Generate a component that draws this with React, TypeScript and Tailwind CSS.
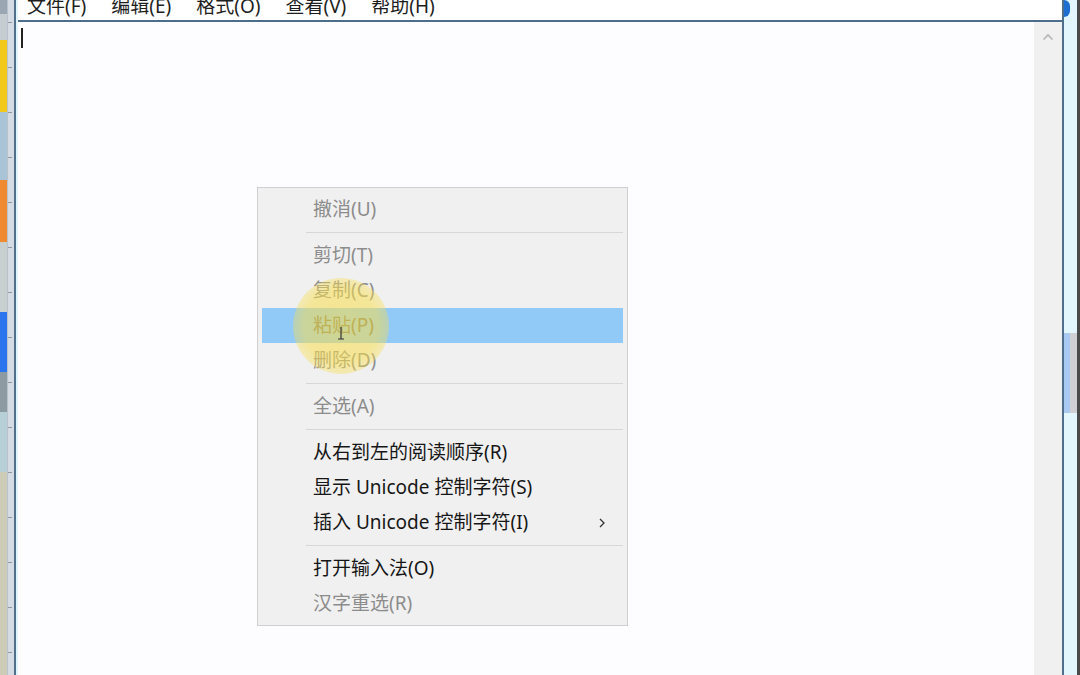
import React from "react";

const font = { fontFamily: '"Noto Sans", "Noto Sans CJK SC", sans-serif' };

type Item = { label: string; disabled?: boolean; hl?: boolean; sub?: boolean } | "sep";

const items: Item[] = [
  { label: "撤消(U)", disabled: true },
  "sep",
  { label: "剪切(T)", disabled: true },
  { label: "复制(C)", disabled: true },
  { label: "粘贴(P)", hl: true },
  { label: "删除(D)", disabled: true },
  "sep",
  { label: "全选(A)", disabled: true },
  "sep",
  { label: "从右到左的阅读顺序(R)" },
  { label: "显示 Unicode 控制字符(S)" },
  { label: "插入 Unicode 控制字符(I)", sub: true },
  "sep",
  { label: "打开输入法(O)" },
  { label: "汉字重选(R)", disabled: true },
];

function ContextMenu() {
  return (
    <div className="absolute left-[257px] top-[187px] w-[371px] h-[439px] bg-[#f0f0f0] border border-[#cfcfcf] pt-[4px] px-[4px] flex flex-col">
      {items.map((it, i) =>
        it === "sep" ? (
          <div key={i} className="h-[11px] flex items-center pl-[44px]">
            <div className="h-px w-full bg-[#d7d7d7]" />
          </div>
        ) : (
          <div
            key={i}
            className={`h-[35px] shrink-0 flex items-center pl-[51px] pr-[14px] text-[19px] ${
              it.hl ? "bg-[#91c9f7] text-[#6f7360]" : it.disabled ? "text-[#8c8c8c]" : "text-[#161616]"
            }`}
          >
            <span className="flex-1">{it.label}</span>
            {it.sub && (
              <svg width="10" height="12" viewBox="0 0 10 12" className="mr-[2px]">
                <path d="M3 2 L7 6 L3 10" fill="none" stroke="#333" strokeWidth="1.3" />
              </svg>
            )}
          </div>
        )
      )}
    </div>
  );
}

export default function App() {
  return (
    <div className="relative w-[1080px] h-[675px] overflow-hidden bg-white flex" style={font}>
      {/* desktop strip */}
      <div className="w-[7px] flex flex-col">
        <div className="h-[14px] bg-[#9aa7b3]" />
        <div className="h-[26px] bg-[#c5ccd2]" />
        <div className="h-[72px] bg-[#f2c91a]" />
        <div className="h-[68px] bg-[#a9c4d6]" />
        <div className="h-[62px] bg-[#f08a30]" />
        <div className="h-[70px] bg-[#c7cfcf]" />
        <div className="h-[60px] bg-[#2a74ee]" />
        <div className="h-[40px] bg-[#8c9aa2]" />
        <div className="h-[60px] bg-[#b7cfd6]" />
        <div className="flex-1 bg-[#cdccb8]" />
      </div>
      {/* ruler strip */}
      <div className="w-[7px] bg-[#d4dbe3] flex flex-col justify-around border-l border-[#b8c2cc]">
        {Array.from({ length: 15 }).map((_, i) => (
          <div key={i} className="h-px w-[4px] bg-[#8d99a5]" />
        ))}
      </div>
      <div className="w-[2px] bg-[#4f6f8d]" />
      <div className="w-[2px] bg-[#dff4fd]" />
      {/* window */}
      <div className="flex-1 flex flex-col">
        <div className="h-[20px] overflow-hidden flex items-start text-[19px] text-[#1e1e1e]">
          <div className="flex gap-[25px] pl-[9px] -mt-[7px] leading-[26px]">
            <span>文件(F)</span>
            <span>编辑(E)</span>
            <span>格式(O)</span>
            <span>查看(V)</span>
            <span>帮助(H)</span>
          </div>
        </div>
        <div className="h-[2px] bg-[#4c6d8b]" />
        <div className="flex-1 flex">
          <div className="flex-1 bg-[#fdfcfe] pl-[3px] pt-[6px]">
            <div className="w-[2px] h-[20px] bg-[#222]" />
          </div>
          <div className="w-[28px] bg-[#f0f0f0] flex justify-center pt-[11px]">
            <svg width="12" height="8" viewBox="0 0 12 8">
              <path d="M1.5 6.5 L6 2 L10.5 6.5" fill="none" stroke="#b5b5b5" strokeWidth="1.6" />
            </svg>
          </div>
        </div>
      </div>
      <div className="w-[2px] bg-[#4f6f8d]" />
      <div className="w-[13px] bg-[#e3f6fd] flex flex-col">
        <div className="h-[17px] flex">
          <div className="w-[6px] h-[17px] rounded-r-full bg-[#1e6fd0]" />
        </div>
        <div className="h-[316px]" />
        <div className="h-[80px] flex">
          <div className="w-[6px] bg-[#a9c9f2]" />
          <div className="flex-1 bg-[#cfcfd4]" />
        </div>
        <div className="flex-1" />
      </div>
      <div className="w-[3px] bg-[#4a4a4a]" />

      <ContextMenu />

      {/* click highlight */}
      <div
        className="absolute left-[293px] top-[278px] w-[96px] h-[96px] rounded-full pointer-events-none"
        style={{
          background:
            "radial-gradient(circle, rgba(248,222,80,0.6) 0%, rgba(248,222,80,0.55) 55%, rgba(248,222,80,0.25) 80%, rgba(248,222,80,0) 100%)",
        }}
      />
      {/* I-beam cursor */}
      <div className="absolute left-[336px] top-[326px] w-[10px] h-[14px] pointer-events-none">
        <svg width="10" height="14" viewBox="0 0 10 14">
          <path d="M5 1 V13 M2 13 H8" stroke="#333" strokeWidth="1.2" fill="none" />
        </svg>
      </div>
    </div>
  );
}
